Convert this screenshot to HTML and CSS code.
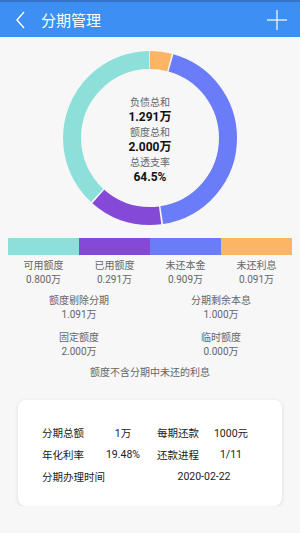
FILE: index.html
```html
<!DOCTYPE html>
<html lang="zh-CN">
<head>
    <meta charset="UTF-8">
    <meta name="viewport" content="width=device-width, initial-scale=1.0">
    <title>分期管理</title>
    <link rel="stylesheet" href="styles.css">
</head>
<body>
    <div class="header">
        <svg class="back" width="10" height="18" viewBox="0 0 10 18">
            <path d="M8 1 L1 9 L8 17" fill="none" stroke="#fff" stroke-width="1.4"/>
        </svg>
        <span class="title">分期管理</span>
        <svg class="plus" width="20" height="20" viewBox="0 0 20 20">
            <path d="M10 0 V20 M0 10 H20" stroke="#dce9fc" stroke-width="1.5"/>
        </svg>
    </div>

    <!-- 环形图 -->
    <div class="donut">
        <svg width="176" height="176" viewBox="0 0 176 176">
            <g transform="rotate(-90 88 88)" fill="none" stroke-width="18">
                <circle cx="88" cy="88" r="78" stroke="#fcb465" stroke-dasharray="19.8 500" stroke-dashoffset="0"/>
                <circle cx="88" cy="88" r="78" stroke="#6a7cf7" stroke-dasharray="211.5 500" stroke-dashoffset="-21.3"/>
                <circle cx="88" cy="88" r="78" stroke="#8549d8" stroke-dasharray="66.7 500" stroke-dashoffset="-234.4"/>
                <circle cx="88" cy="88" r="78" stroke="#8de0da" stroke-dasharray="186 500" stroke-dashoffset="-302.6"/>
            </g>
        </svg>
        <div class="donut-text">
            <p class="lbl">负债总和</p>
            <p class="num">1.291万</p>
            <p class="lbl">额度总和</p>
            <p class="num">2.000万</p>
            <p class="lbl">总透支率</p>
            <p class="num">64.5%</p>
        </div>
    </div>

    <div class="bar">
        <span class="teal"></span>
        <span class="purple"></span>
        <span class="blue"></span>
        <span class="orange"></span>
    </div>
    <div class="legend">
        <div><p>可用额度</p><p>0.800万</p></div>
        <div><p>已用额度</p><p>0.291万</p></div>
        <div><p>未还本金</p><p>0.909万</p></div>
        <div><p>未还利息</p><p>0.091万</p></div>
    </div>

    <div class="stats">
        <div><p>额度剔除分期</p><p>1.091万</p></div>
        <div><p>分期剩余本息</p><p>1.000万</p></div>
        <div><p>固定额度</p><p>2.000万</p></div>
        <div><p>临时额度</p><p>0.000万</p></div>
    </div>
    <p class="note">额度不含分期中未还的利息</p>

    <!-- 分期详情 -->
    <div class="card">
        <span>分期总额</span><span class="val">1万</span>
        <span class="mid">每期还款</span><span class="val">1000元</span>
        <span>年化利率</span><span class="val">19.48%</span>
        <span class="mid">还款进程</span><span class="val">1/11</span>
        <span>分期办理时间</span><span class="val date">2020-02-22</span>
    </div>
</body>
</html>
```

FILE: styles.css
```css
body {
    margin: 0;
    background-color: #f7f7f7;
    font-family: Roboto, "Noto Sans CJK SC", sans-serif;
    font-size: 10px;
    color: #666;
}

p {
    margin: 0;
}

.header {
    height: 35px;
    border-top: 2px solid #3474c8;
    background-color: #3d8ff3;
    display: flex;
    align-items: center;
    padding: 0 13px 0 16px;
}

.back {
    margin-right: 15px;
}

.title {
    color: #fff;
    font-size: 15px;
    flex: 1;
}

.donut {
    display: grid;
    justify-items: center;
    align-items: center;
    margin-top: 13px;
}

.donut svg, .donut-text {
    grid-area: 1 / 1;
}

.donut-text {
    text-align: center;
    line-height: 15px;
    padding-top: 3px;
}

.donut-text .num {
    color: #111;
    font-weight: bold;
    font-size: 12px;
}

.bar {
    display: flex;
    height: 17px;
    margin: 12px 8px 0;
}

.bar span {
    flex: 1;
}

.teal { background-color: #8de0da; }
.purple { background-color: #8549d8; }
.blue { background-color: #6a7cf7; }
.orange { background-color: #fcb465; }

.legend {
    display: flex;
    margin: 4px 8px 0;
    line-height: 14px;
    text-align: center;
}

.legend div {
    flex: 1;
}

.stats {
    display: grid;
    grid-template-columns: 1fr 1fr;
    row-gap: 9px;
    margin: 7px 8px 0;
    line-height: 14px;
    text-align: center;
}

.note {
    text-align: center;
    line-height: 14px;
    margin-top: 7px;
}

.card {
    margin: 20px 18px 0;
    background: #fff;
    border-radius: 8px;
    box-shadow: 0 1px 4px rgba(0,0,0,0.12);
    padding: 21px 24px 19px;
    display: grid;
    grid-template-columns: 60px 42px 61px 52px;
    grid-auto-rows: 22px;
    align-items: center;
    color: #222;
    font-size: 10.5px;
    white-space: nowrap;
}

.card .mid {
    padding-left: 13px;
}

.card .val {
    text-align: center;
}

.card .date {
    grid-column: 2 / 5;
    padding-left: 49px;
}
```
